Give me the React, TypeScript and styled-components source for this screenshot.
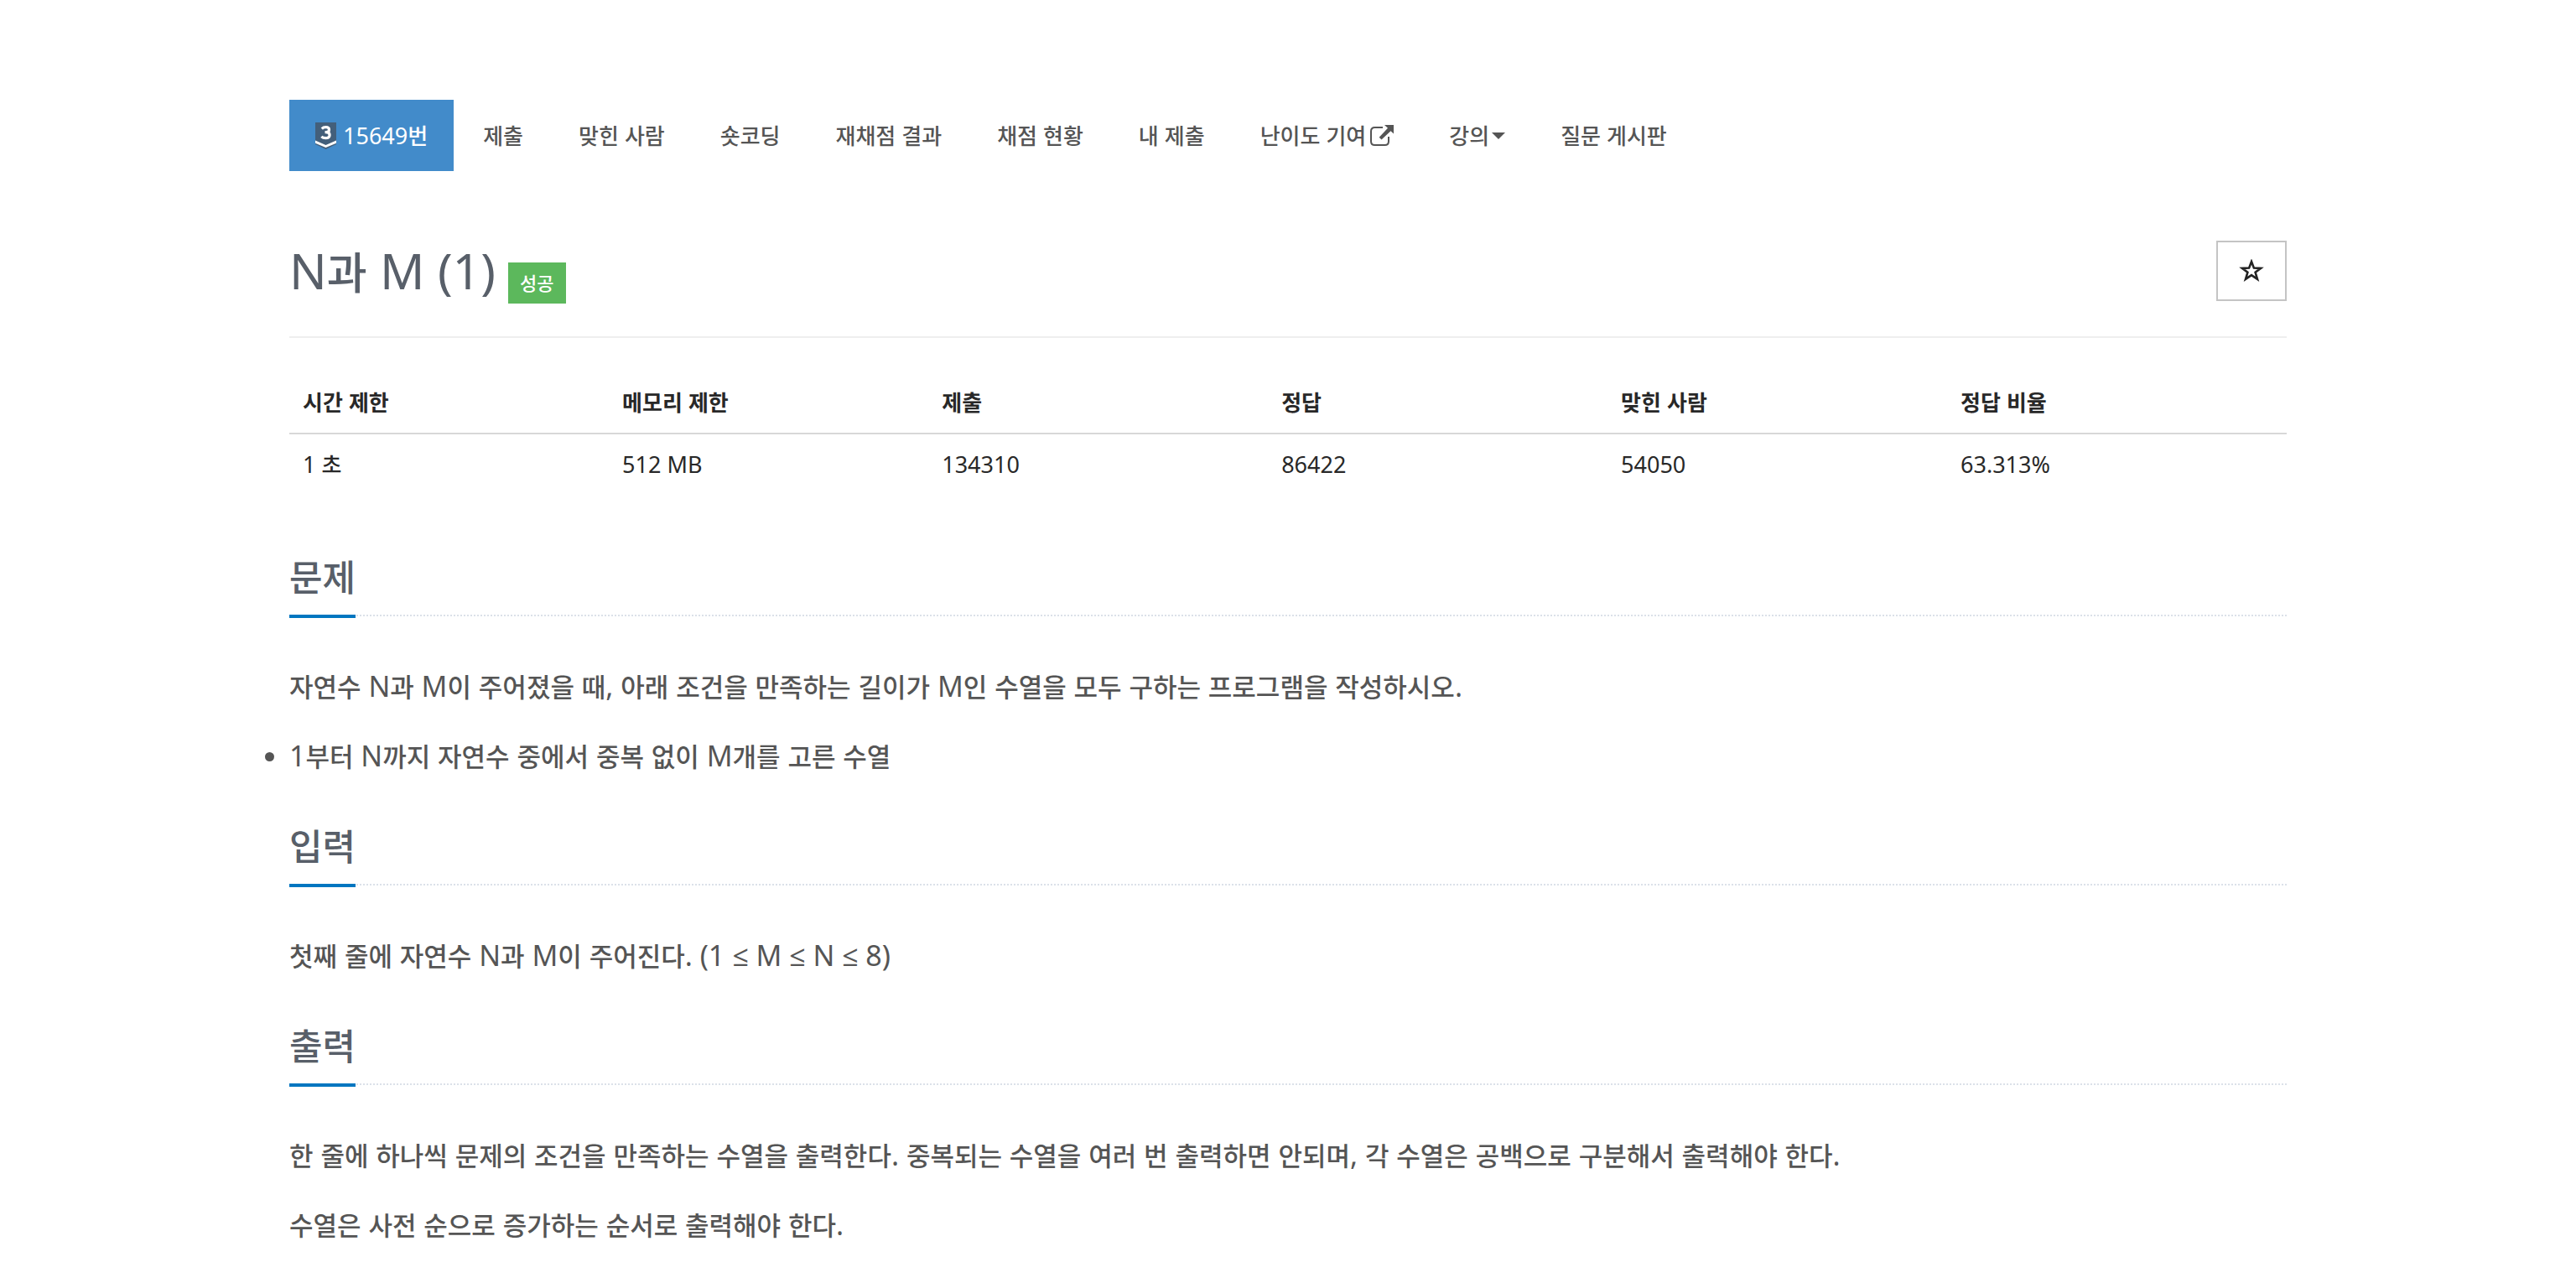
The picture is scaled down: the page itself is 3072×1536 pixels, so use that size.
import React from "react";
import styled, { createGlobalStyle } from "styled-components";

const GlobalStyle = createGlobalStyle`
  * { box-sizing: border-box; }
  body {
    margin: 0;
    background: #fff;
    color: #555;
    font-family: "Noto Sans", "Open Sans", "Noto Sans CJK KR", sans-serif;
    font-weight: 500;
  }
`;

const Page = styled.main`
  max-width: 2446px;
  margin: 0 auto;
  padding: 119px 32px 0;
`;

const LatinRun = styled.span<{ $size: number }>`
  font-size: ${(p) => p.$size}px;
  font-weight: 400;
  line-height: 1;
`;

/* Hangul looks larger than Latin at the same size, so Latin runs get their own size. */
function Mixed({ text, latin }: { text: string; latin: number }) {
  const parts = text.split(/([^\uac00-\ud7a3]+)/).filter(Boolean);
  return (
    <>
      {parts.map((part, i) =>
        /[\uac00-\ud7a3]/.test(part) ? (
          part
        ) : (
          <LatinRun key={i} $size={latin}>
            {part}
          </LatinRun>
        )
      )}
    </>
  );
}

const Menu = styled.ul`
  display: flex;
  flex-wrap: wrap;
  gap: 4px;
  margin: 0;
  padding: 0;
  list-style: none;
`;

const MenuLink = styled.a<{ $active?: boolean }>`
  display: flex;
  align-items: center;
  height: 85px;
  padding: 0 31px;
  color: ${(p) => (p.$active ? "#fff" : "#555")};
  background: ${(p) => (p.$active ? "#428bca" : "transparent")};
  font-size: 26px;
  line-height: 40px;
  text-decoration: none;
  white-space: pre;
`;

const TierIcon = styled.svg`
  width: 25px;
  height: 32px;
  margin-right: 8px;
`;

const LinkIcon = styled.svg`
  width: 29px;
  height: 26px;
  margin-left: 4px;
`;

const Caret = styled.span`
  margin-left: 3px;
  border-top: 8px solid #555;
  border-left: 8px solid transparent;
  border-right: 8px solid transparent;
`;

const TitleBar = styled.header`
  display: flex;
  justify-content: space-between;
  align-items: flex-start;
  margin-top: 83px;
  padding-bottom: 39px;
  border-bottom: 2px solid #eee;
`;

const TitleGroup = styled.div`
  display: flex;
  align-items: flex-end;
  gap: 15px;
`;

const Title = styled.h1`
  margin: 0;
  color: #585f69;
  font-size: 52px;
  font-weight: 500;
  line-height: 75px;
  white-space: pre;
`;

const Badge = styled.span`
  padding: 0 14px;
  background: #5cb85c;
  color: #fff;
  font-size: 22px;
  font-weight: 500;
  line-height: 49px;
`;

const StarButton = styled.button`
  display: flex;
  align-items: center;
  justify-content: center;
  width: 84px;
  height: 72px;
  padding: 0;
  border: 2px solid #c4c4c4;
  background: #fff;
  cursor: pointer;
`;

const StarIcon = styled.svg`
  width: 30px;
  height: 28px;
`;

const InfoTable = styled.table`
  width: 100%;
  margin-top: 41px;
  border-collapse: separate;
  border-spacing: 0;
  table-layout: fixed;
  color: #282828;
  text-align: left;
`;

const HeadCell = styled.th<{ $width: number }>`
  width: ${(p) => p.$width}%;
  padding: 16px;
  border-bottom: 2px solid #d8d8d8;
  font-size: 26px;
  font-weight: 700;
  line-height: 40px;
`;

const Cell = styled.td`
  padding: 16px;
  font-size: 26px;
  line-height: 40px;
`;

const Sections = styled.div`
  padding-top: 43px;
`;

const Headline = styled.div`
  display: flex;
  padding-top: 26px;
  border-bottom: 2px dotted #dbe1e9;
`;

const SectionTitle = styled.h2`
  margin: 0 0 -4px;
  padding-bottom: 14px;
  border-bottom: 4px solid #0076c0;
  color: #585f69;
  font-size: 43px;
  font-weight: 500;
  line-height: 60px;
`;

const Body = styled.div`
  padding-top: 53px;
  font-size: 31px;
  line-height: 62px;
`;

const Paragraph = styled.p`
  margin: 0 0 21px;
`;

const List = styled.ul`
  margin: 0 0 21px;
  padding: 0;
`;

const menu = [
  { text: "제출" },
  { text: "맞힌 사람" },
  { text: "숏코딩" },
  { text: "재채점 결과" },
  { text: "채점 현황" },
  { text: "내 제출" },
  { text: "난이도 기여", external: true },
  { text: "강의", caret: true },
  { text: "질문 게시판" },
];

const info = [
  { label: "시간 제한", value: "1 초", width: 16 },
  { label: "메모리 제한", value: "512 MB", width: 16 },
  { label: "제출", value: "134310", width: 17 },
  { label: "정답", value: "86422", width: 17 },
  { label: "맞힌 사람", value: "54050", width: 17 },
  { label: "정답 비율", value: "63.313%", width: 17 },
];

function Section({ title, children }: { title: string; children: React.ReactNode }) {
  return (
    <section>
      <Headline>
        <SectionTitle>{title}</SectionTitle>
      </Headline>
      <Body>{children}</Body>
    </section>
  );
}

export default function App() {
  return (
    <>
      <GlobalStyle />
      <Page>
        <nav>
          <Menu>
            <li>
              <MenuLink href="#problem" $active>
                <TierIcon viewBox="0 0 25 32" aria-hidden="true">
                  <path d="M0 0h25v26l-12.500 6L0 26z" fill="#435f7a" />
                  <path d="M0 21.500l12.500 5.500L25 21.500v3.300l-12.500 5.200L0 24.800z" fill="#fff" />
                  <path
                    d="M7.800 6.600c1.300-1.400 3-1.900 4.700-1.900 2.300 0 4 1 4 3 0 1.900-1.500 3-3.800 3h-1.200 1.200c2.700 0 4.400 1.200 4.400 3.300 0 2.400-2 3.700-4.800 3.700-2 0-3.700-.6-5-1.900"
                    transform="translate(0 1)"
                    fill="none"
                    stroke="#fff"
                    strokeWidth="3.200"
                  />
                </TierIcon>
                <span>
                  <Mixed text="15649번" latin={27} />
                </span>
              </MenuLink>
            </li>
            {menu.map((item) => (
              <li key={item.text}>
                <MenuLink href="#menu">
                  <span>
                    <Mixed text={item.text} latin={27} />
                  </span>
                  {item.external && (
                    <LinkIcon viewBox="0 0 29 26" aria-hidden="true">
                      <path
                        d="M16 3H6.500Q2 3 2 7.500v12Q2 24 6.500 24h12q4.500 0 4.500-4.500V14"
                        fill="none"
                        stroke="#555"
                        strokeWidth="2"
                      />
                      <path d="M18 0h11v10.500l-3.500-3.300L14.500 17.500l-2.800-2.800L22 3.800z" fill="#555" />
                    </LinkIcon>
                  )}
                  {item.caret && <Caret />}
                </MenuLink>
              </li>
            ))}
          </Menu>
        </nav>

        <TitleBar>
          <TitleGroup>
            <Title>
              <Mixed text="N과 M (1)" latin={59} />
            </Title>
            <Badge>성공</Badge>
          </TitleGroup>
          <StarButton type="button" aria-label="즐겨찾기">
            <StarIcon viewBox="0 0 30 28" aria-hidden="true">
              <path
                d="M15 3l2.900 7.600 8.200.3-6.500 4.900 2.400 8L15 19.100l-7 4.700 2.400-8-6.500-4.900 8.200-.3z"
                fill="none"
                stroke="#222"
                strokeWidth="2.600"
              />
            </StarIcon>
          </StarButton>
        </TitleBar>

        <InfoTable>
          <thead>
            <tr>
              {info.map((c) => (
                <HeadCell key={c.label} $width={c.width} scope="col">
                  <Mixed text={c.label} latin={27} />
                </HeadCell>
              ))}
            </tr>
          </thead>
          <tbody>
            <tr>
              {info.map((c) => (
                <Cell key={c.label}>
                  <Mixed text={c.value} latin={27} />
                </Cell>
              ))}
            </tr>
          </tbody>
        </InfoTable>

        <Sections>
          <Section title="문제">
            <Paragraph>
              <Mixed
                text="자연수 N과 M이 주어졌을 때, 아래 조건을 만족하는 길이가 M인 수열을 모두 구하는 프로그램을 작성하시오."
                latin={34}
              />
            </Paragraph>
            <List>
              <li>
                <Mixed text="1부터 N까지 자연수 중에서 중복 없이 M개를 고른 수열" latin={34} />
              </li>
            </List>
          </Section>
          <Section title="입력">
            <Paragraph>
              <Mixed text="첫째 줄에 자연수 N과 M이 주어진다. (1 ≤ M ≤ N ≤ 8)" latin={34} />
            </Paragraph>
          </Section>
          <Section title="출력">
            <Paragraph>
              <Mixed
                text="한 줄에 하나씩 문제의 조건을 만족하는 수열을 출력한다. 중복되는 수열을 여러 번 출력하면 안되며, 각 수열은 공백으로 구분해서 출력해야 한다."
                latin={34}
              />
            </Paragraph>
            <Paragraph>
              <Mixed text="수열은 사전 순으로 증가하는 순서로 출력해야 한다." latin={34} />
            </Paragraph>
          </Section>
        </Sections>
      </Page>
    </>
  );
}
